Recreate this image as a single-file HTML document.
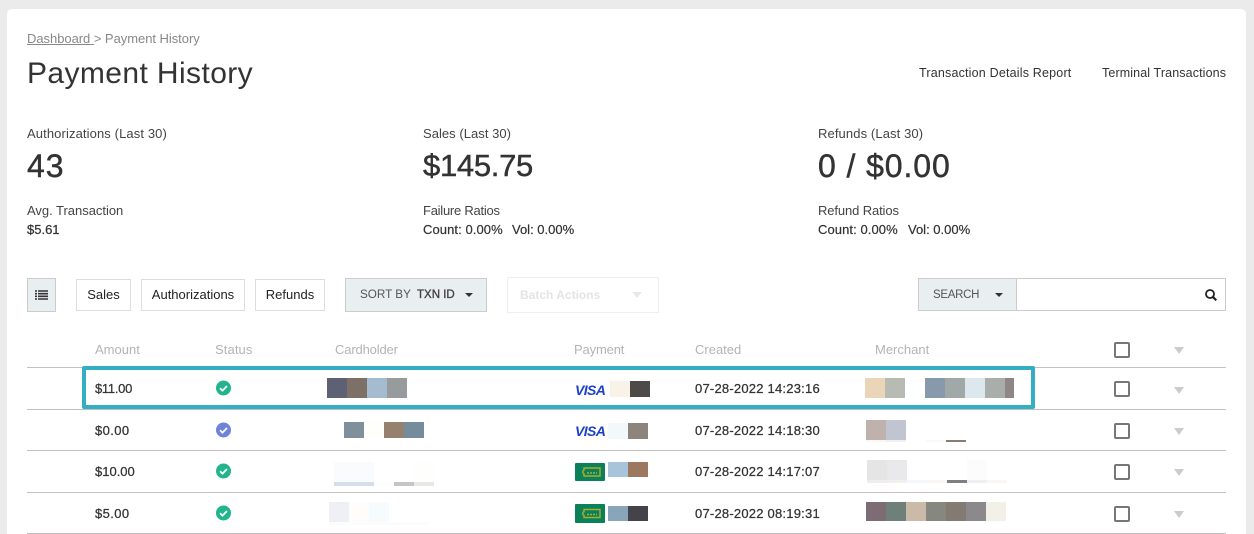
<!DOCTYPE html>
<html><head><meta charset="utf-8"><style>
html,body{margin:0;padding:0;width:1254px;height:534px;overflow:hidden;background:#ebebeb}
body{position:relative;font-family:"Liberation Sans",Arial,sans-serif;color:#333}
#card{position:absolute;left:7px;top:9px;width:1239px;height:540px;background:#fff;border-radius:5px 5px 0 0}
.t{position:absolute;white-space:nowrap;line-height:16px;font-size:13px}
.g{color:#b4b4b4}
.m{-webkit-text-stroke:.25px currentColor;color:#333}
.s{color:#444;letter-spacing:.11px}
.n{-webkit-text-stroke:.45px #333;color:#333}
.b{position:absolute;box-sizing:border-box;white-space:nowrap;text-align:center;font-size:13px}
.r{position:absolute;left:27px;width:1199px;height:1px;background:#c2c0c0}
.p{position:absolute}
.cb{position:absolute;left:1114px;width:16px;height:16px;box-sizing:border-box;border:2px solid #777;border-radius:2px}
.c{position:absolute;left:1174px;width:0;height:0;border-left:5px solid transparent;border-right:5px solid transparent;border-top:7px solid #ccc}
.v{position:absolute;left:575px;font:italic bold 14px/16px "Liberation Sans",sans-serif;color:#1c3fc8;letter-spacing:-.6px;width:32px;white-space:nowrap}
svg{position:absolute;display:block}
</style></head><body>
<div id="card"></div>

<div class="t" style="left:27px;top:31px;color:#888;letter-spacing:-.04px"><span style="text-decoration:underline">Dashboard </span> &gt; Payment History</div>
<div class="t" style="left:27px;top:56px;font-size:30px;line-height:36px;letter-spacing:.4px;color:#333">Payment History</div>
<div class="t" style="left:919px;top:65px;color:#333;letter-spacing:.19px;font-size:12.5px">Transaction Details Report</div>
<div class="t" style="left:1102px;top:65px;color:#333;letter-spacing:.12px;font-size:12.5px">Terminal Transactions</div>

<div class="t s" style="left:27px;top:126px">Authorizations (Last 30)</div>
<div class="t s" style="left:423px;top:126px;letter-spacing:.04px">Sales (Last 30)</div>
<div class="t s" style="left:818px;top:126px">Refunds (Last 30)</div>
<div class="t n" style="left:27px;top:147px;font-size:32px;line-height:38px;letter-spacing:1px">43</div>
<div class="t n" style="left:423px;top:147px;font-size:31px;line-height:38px;letter-spacing:-.3px">$145.75</div>
<div class="t n" style="left:818px;top:147px;font-size:32px;line-height:38px;letter-spacing:.9px">0 / $0.00</div>
<div class="t s" style="left:27px;top:203px;letter-spacing:-.02px">Avg. Transaction</div>
<div class="t s" style="left:423px;top:203px;letter-spacing:-.25px">Failure Ratios</div>
<div class="t s" style="left:818px;top:203px;letter-spacing:-.12px">Refund Ratios</div>
<div class="t m" style="left:27px;top:222px;font-size:13px">$5.61</div>
<div class="t m" style="left:423px;top:222px;letter-spacing:.08px;-webkit-text-stroke:.2px #333">Count: 0.00%</div>
<div class="t m" style="left:512px;top:222px;-webkit-text-stroke:.2px #333">Vol: 0.00%</div>
<div class="t m" style="left:818px;top:222px;letter-spacing:.08px;-webkit-text-stroke:.2px #333">Count: 0.00%</div>
<div class="t m" style="left:908px;top:222px;-webkit-text-stroke:.2px #333">Vol: 0.00%</div>

<!-- toolbar -->
<div class="b" style="left:27px;top:278px;width:29px;height:34px;background:#e9eef0;border:1px solid #ccc"></div>
<svg style="left:35px;top:290px" width="13" height="10" viewBox="0 0 13 10"><path d="M0 1h2M3 1h10M0 3.7h2M3 3.7h10M0 6.3h2M3 6.3h10M0 9h2M3 9h10" stroke="#333" stroke-width="1.6"/></svg>
<div class="b" style="left:76px;top:279px;width:55px;height:32px;border:1px solid #ddd;line-height:29px;color:#222">Sales</div>
<div class="b" style="left:141px;top:279px;width:104px;height:32px;border:1px solid #ddd;line-height:29px;color:#222">Authorizations</div>
<div class="b" style="left:255px;top:279px;width:70px;height:32px;border:1px solid #ddd;line-height:29px;color:#222">Refunds</div>
<div class="b" style="left:345px;top:278px;width:142px;height:34px;background:#e9eef0;border:1px solid #ccc"></div>
<div class="t" style="left:360px;top:287px;font-size:11.7px;color:#555">SORT BY</div>
<div class="t" style="left:417px;top:287px;font-size:11.5px;color:#444;-webkit-text-stroke:.35px #444">TXN ID</div>
<div class="p" style="left:465px;top:293px;border-left:4px solid transparent;border-right:4px solid transparent;border-top:4px solid #333"></div>
<div class="b" style="left:507px;top:277px;width:152px;height:36px;border:1px solid #eee"></div>
<div class="t" style="left:520px;top:287px;color:#e4e4e4;font-weight:bold;font-size:12px">Batch Actions</div>
<div class="p" style="left:632px;top:292px;border-left:5px solid transparent;border-right:5px solid transparent;border-top:6px solid #e8e8e8"></div>
<div class="b" style="left:918px;top:278px;width:308px;height:33px;border:1px solid #ccc"></div>
<div class="b" style="left:918px;top:278px;width:99px;height:33px;background:#e9eef0;border:1px solid #ccc"></div>
<div class="t" style="left:933px;top:287px;font-size:11.5px;letter-spacing:-.3px;color:#555">SEARCH</div>
<div class="p" style="left:995px;top:293px;border-left:4px solid transparent;border-right:4px solid transparent;border-top:4px solid #333"></div>
<svg style="left:1205px;top:289px" width="12" height="12" viewBox="0 0 12 12"><circle cx="5" cy="5" r="4" fill="none" stroke="#222" stroke-width="1.8"/><path d="M7.8 7.8L11.3 11.3" stroke="#222" stroke-width="2.2"/></svg>

<!-- header -->
<div class="t g" style="left:95px;top:342px">Amount</div>
<div class="t g" style="left:215px;top:342px;letter-spacing:.1px">Status</div>
<div class="t g" style="left:335px;top:342px;letter-spacing:-.15px">Cardholder</div>
<div class="t g" style="left:574px;top:342px;letter-spacing:-.15px">Payment</div>
<div class="t g" style="left:695px;top:342px">Created</div>
<div class="t g" style="left:875px;top:342px">Merchant</div>
<div class="cb" style="top:342px"></div><div class="c" style="top:347px"></div>

<div class="r" style="top:367px"></div>
<div class="r" style="top:409px"></div>
<div class="r" style="top:450px"></div>
<div class="r" style="top:492px"></div>
<div class="r" style="top:533px"></div>

<!-- rows -->
<div class="t m" style="left:95px;top:381px;letter-spacing:-.3px">$11.00</div>
<div class="t m" style="left:95px;top:423px;letter-spacing:.4px">$0.00</div>
<div class="t m" style="left:95px;top:464px">$10.00</div>
<div class="t m" style="left:95px;top:506px;letter-spacing:.4px">$5.00</div>
<div class="t m" style="left:695px;top:381px;letter-spacing:.22px">07-28-2022 14:23:16</div>
<div class="t m" style="left:695px;top:423px;letter-spacing:.22px">07-28-2022 14:18:30</div>
<div class="t m" style="left:695px;top:464px;letter-spacing:.22px">07-28-2022 14:17:07</div>
<div class="t m" style="left:695px;top:506px;letter-spacing:.22px">07-28-2022 08:19:31</div>

<svg style="left:216px;top:380px" width="15" height="16" viewBox="0 0 15 16"><circle cx="7.5" cy="8" r="7.5" fill="#21b48d"/><path d="M4 8.2l2.5 2.4L11 6" fill="none" stroke="#fff" stroke-width="1.8"/></svg>
<svg style="left:216px;top:422px" width="15" height="16" viewBox="0 0 15 16"><circle cx="7.5" cy="8" r="7.5" fill="#6d84d8"/><path d="M4 8.2l2.5 2.4L11 6" fill="none" stroke="#fff" stroke-width="1.8"/></svg>
<svg style="left:216px;top:463px" width="15" height="16" viewBox="0 0 15 16"><circle cx="7.5" cy="8" r="7.5" fill="#21b48d"/><path d="M4 8.2l2.5 2.4L11 6" fill="none" stroke="#fff" stroke-width="1.8"/></svg>
<svg style="left:216px;top:505px" width="15" height="16" viewBox="0 0 15 16"><circle cx="7.5" cy="8" r="7.5" fill="#21b48d"/><path d="M4 8.2l2.5 2.4L11 6" fill="none" stroke="#fff" stroke-width="1.8"/></svg>

<div class="v" style="top:382px">VISA</div>
<div class="v" style="top:423px">VISA</div>
<svg style="left:575px;top:463px" width="30" height="18" viewBox="0 0 30 18"><rect width="30" height="18" rx="1" fill="#0a8158"/><path d="M9 5h16v8H9v-2.2a1.9 1.9 0 0 1 0-3.6z" fill="none" stroke="#a9ad2d" stroke-width="1.4"/><path d="M12 10h10" stroke="#a9ad2d" stroke-width="1.4" stroke-dasharray="2 1"/></svg>
<svg style="left:575px;top:504px" width="30" height="19" viewBox="0 0 30 19"><rect width="30" height="19" rx="1" fill="#0a8158"/><path d="M9 5.5h16v8H9v-2.2a1.9 1.9 0 0 1 0-3.6z" fill="none" stroke="#a9ad2d" stroke-width="1.4"/><path d="M12 10.5h10" stroke="#a9ad2d" stroke-width="1.4" stroke-dasharray="2 1"/></svg>

<!-- blurred swatches -->
<svg style="left:0;top:0" width="1254" height="534" viewBox="0 0 1254 534" shape-rendering="crispEdges">
<rect x="327" y="378" width="20" height="20" fill="#5d6173"/><rect x="347" y="378" width="20" height="20" fill="#7d7067"/><rect x="367" y="378" width="20" height="20" fill="#a5bbd0"/><rect x="387" y="378" width="20" height="20" fill="#979b9b"/>
<rect x="344" y="422" width="20" height="16" fill="#7f909c"/><rect x="364" y="422" width="20" height="16" fill="#fefefb"/><rect x="384" y="422" width="20" height="16" fill="#95816d"/><rect x="404" y="422" width="20" height="16" fill="#758c9c"/>
<rect x="334" y="462" width="40" height="20" fill="#fafbfd"/><rect x="414" y="462" width="20" height="20" fill="#fefefc"/><rect x="334" y="482" width="40" height="4" fill="#d5dde8"/><rect x="374" y="482" width="20" height="4" fill="#fcfdfe"/><rect x="394" y="482" width="20" height="4" fill="#c4c5c7"/><rect x="414" y="482" width="20" height="4" fill="#e8e9e4"/>
<rect x="329" y="502" width="20" height="20" fill="#eef0f5"/><rect x="349" y="502" width="20" height="20" fill="#fefdfb"/><rect x="369" y="502" width="20" height="20" fill="#f6fbfe"/><rect x="329" y="522" width="100" height="3" fill="#fcfcfd"/>

<rect x="610" y="381" width="20" height="16" fill="#f9f2e8"/><rect x="630" y="381" width="20" height="16" fill="#4e4a48"/>
<rect x="608" y="423" width="20" height="16" fill="#f3f8fb"/><rect x="628" y="423" width="20" height="16" fill="#8d857b"/>
<rect x="608" y="462" width="20" height="15" fill="#a7c4da"/><rect x="628" y="462" width="20" height="15" fill="#9b785e"/>
<rect x="608" y="506" width="20" height="15" fill="#89a5ba"/><rect x="628" y="506" width="20" height="15" fill="#434349"/>

<rect x="865" y="378" width="20" height="20" fill="#ead5b8"/><rect x="885" y="378" width="20" height="20" fill="#b8bbb3"/><rect x="925" y="378" width="20" height="20" fill="#8899ac"/><rect x="945" y="378" width="20" height="20" fill="#a0a9a7"/><rect x="965" y="378" width="20" height="20" fill="#dde8ee"/><rect x="985" y="378" width="20" height="20" fill="#a9aeaa"/><rect x="1005" y="378" width="9" height="20" fill="#8f8685"/>

<rect x="866" y="420" width="20" height="20" fill="#bfb2ae"/><rect x="886" y="420" width="20" height="20" fill="#c1c4d1"/><rect x="866" y="440" width="20" height="2" fill="#faf7f5"/><rect x="886" y="440" width="20" height="2" fill="#f5f1ea"/><rect x="926" y="440" width="20" height="2" fill="#faf9f8"/><rect x="946" y="440" width="20" height="2" fill="#8b7c72"/>

<rect x="867" y="460" width="20" height="20" fill="#e6e5e6"/><rect x="887" y="460" width="20" height="20" fill="#e9e9eb"/><rect x="967" y="460" width="20" height="20" fill="#fcfcfc"/><rect x="867" y="480" width="20" height="3" fill="#eeeef0"/><rect x="887" y="480" width="20" height="3" fill="#f5f0ec"/><rect x="907" y="480" width="20" height="3" fill="#f3f7fb"/><rect x="927" y="480" width="20" height="3" fill="#faf5f2"/><rect x="947" y="480" width="20" height="3" fill="#7f7e82"/><rect x="967" y="480" width="20" height="3" fill="#eeeff3"/><rect x="987" y="480" width="20" height="3" fill="#fbf6f3"/>

<rect x="866" y="502" width="20" height="19" fill="#7e6c74"/><rect x="886" y="502" width="20" height="19" fill="#6f7f7a"/><rect x="906" y="502" width="20" height="19" fill="#cbbaa8"/><rect x="926" y="502" width="20" height="19" fill="#868880"/><rect x="946" y="502" width="20" height="19" fill="#837a72"/><rect x="966" y="502" width="20" height="19" fill="#8b898c"/><rect x="986" y="502" width="20" height="19" fill="#f3f1e7"/>
</svg>

<div class="cb" style="top:381px"></div><div class="c" style="top:387px"></div>
<div class="cb" style="top:423px"></div><div class="c" style="top:428px"></div>
<div class="cb" style="top:464px"></div><div class="c" style="top:469px"></div>
<div class="cb" style="top:506px"></div><div class="c" style="top:511px"></div>

<div class="p" style="left:82px;top:366px;width:953px;height:43px;box-sizing:border-box;border:4px solid #34aec2;border-radius:2px"></div>
</body></html>
